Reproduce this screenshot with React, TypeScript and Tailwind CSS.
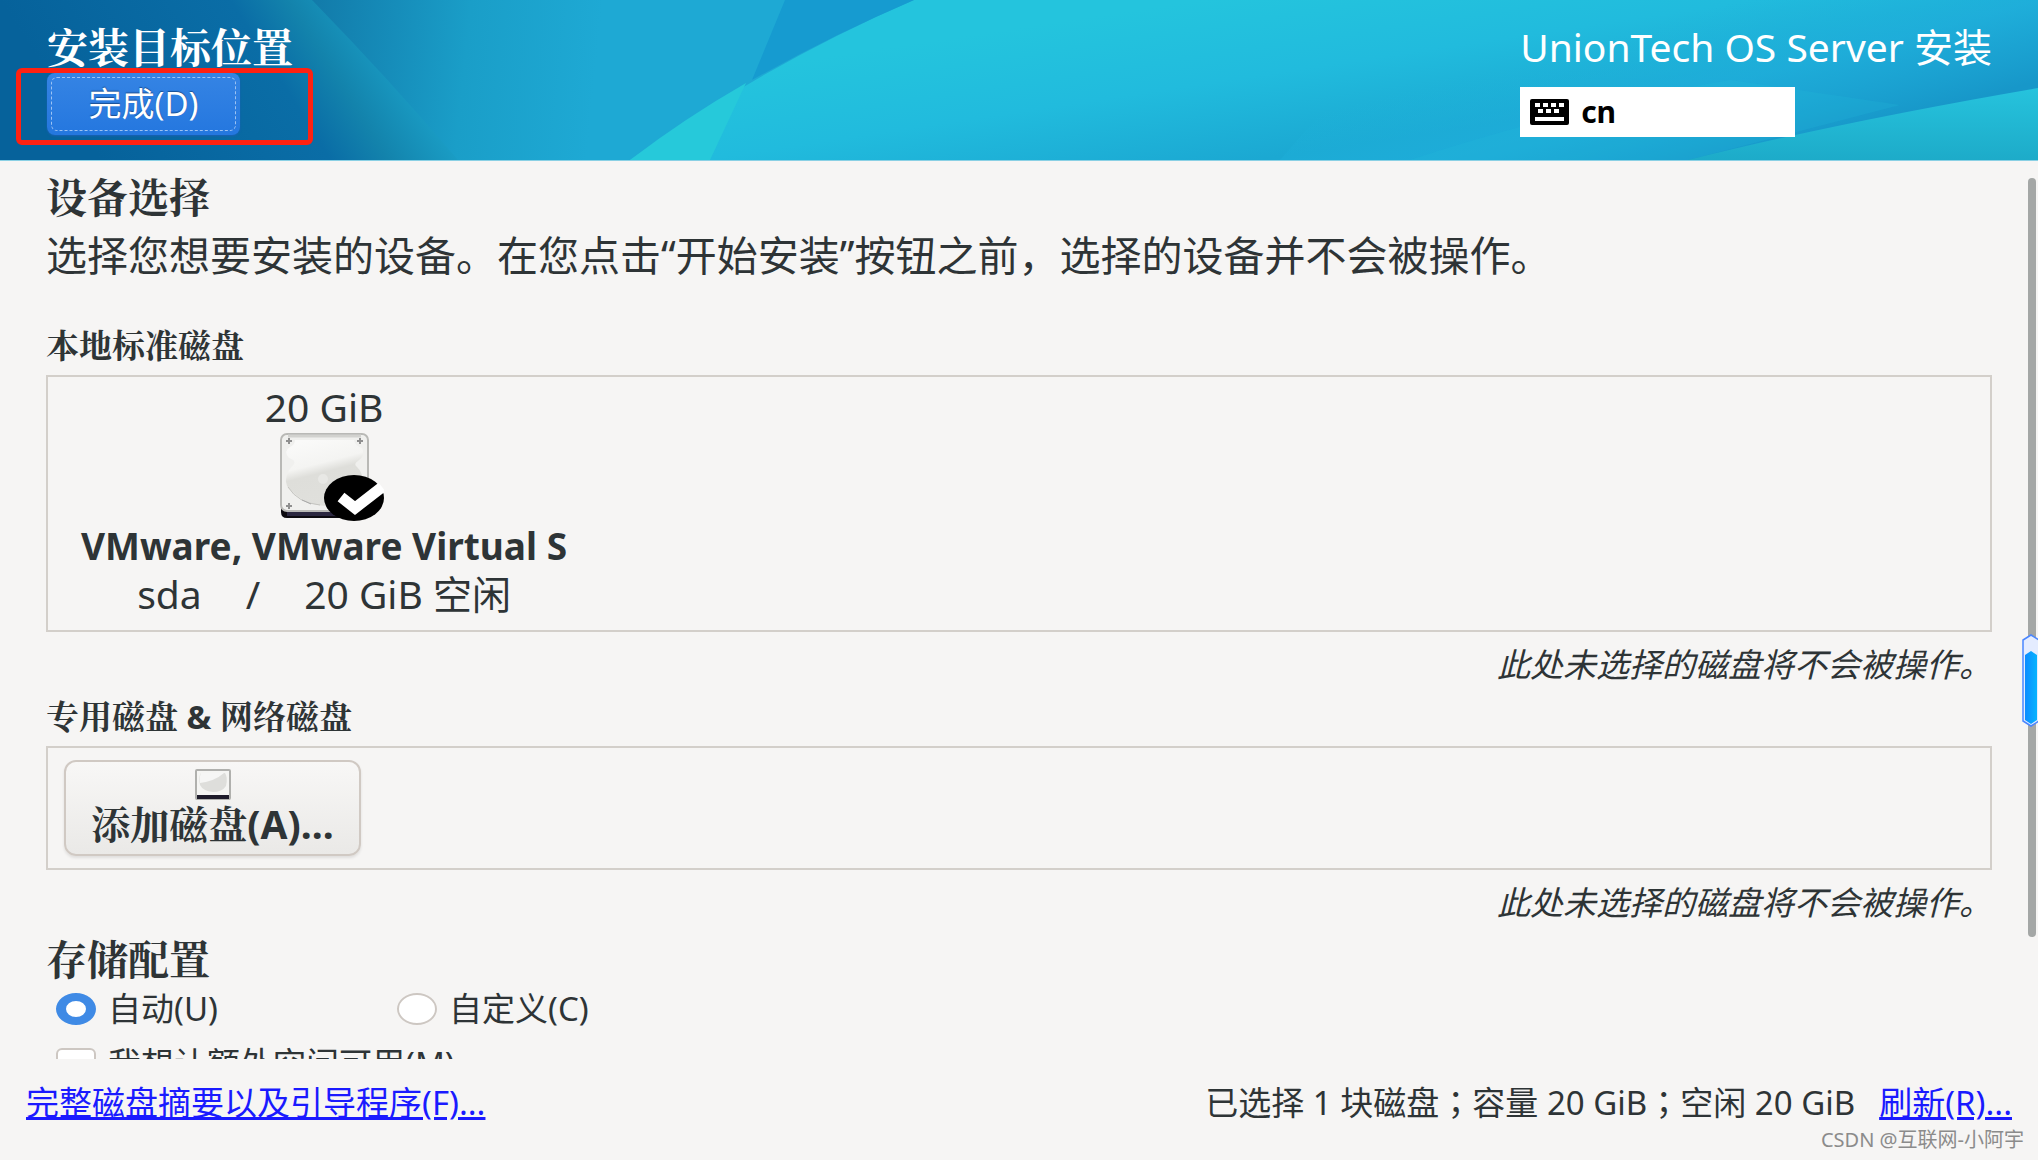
import React, { useState } from 'react';

const sans = "font-['Noto_Sans','Noto_Sans_CJK_SC',sans-serif]";
const serif = "font-['Noto_Sans','Noto_Serif_CJK_SC','Noto_Sans_CJK_SC',serif]";

function HeaderArt() {
    return (
        <svg className="absolute inset-0 h-full w-full" viewBox="0 0 2038 160" preserveAspectRatio="none" aria-hidden="true">
            <defs>
                <linearGradient id="left" gradientUnits="userSpaceOnUse" x1="0" y1="0" x2="259" y2="-162">
                    <stop offset="0" stopColor="#06629b" />
                    <stop offset="0.64" stopColor="#0a6da6" />
                    <stop offset="0.8" stopColor="#1383ac" />
                    <stop offset="1" stopColor="#1a9dc5" />
                </linearGradient>
                <linearGradient id="mid" gradientUnits="userSpaceOnUse" x1="310" y1="0" x2="600" y2="30">
                    <stop offset="0" stopColor="#127aa9" />
                    <stop offset="0.3" stopColor="#168dba" />
                    <stop offset="0.55" stopColor="#1a9ec8" />
                    <stop offset="1" stopColor="#1ea9d4" />
                </linearGradient>
                <linearGradient id="base" gradientUnits="userSpaceOnUse" x1="1200" y1="0" x2="1225" y2="165">
                    <stop offset="0" stopColor="#24c4dd" />
                    <stop offset="0.5" stopColor="#21bbdd" />
                    <stop offset="1" stopColor="#1ba8d2" />
                </linearGradient>
                <linearGradient id="shade" gradientUnits="userSpaceOnUse" x1="1740" y1="0" x2="1780" y2="150">
                    <stop offset="0" stopColor="#1fb5dc" stopOpacity="0" />
                    <stop offset="0.5" stopColor="#1faddb" stopOpacity="0.7" />
                    <stop offset="1" stopColor="#1797c9" />
                </linearGradient>
                <linearGradient id="corner" x1="0" y1="0" x2="0" y2="1">
                    <stop offset="0" stopColor="#26c3dd" />
                    <stop offset="1" stopColor="#1dabc9" />
                </linearGradient>
            </defs>
            <rect width="2038" height="160" fill="url(#base)" />
            <path d="M1280 160 L1420 0 H2038 V160 Z" fill="url(#shade)" />
            <path d="M1410 160 Q1580 105 1730 80 L1900 105 L1688 160 Z" fill="#22bddb" opacity="0.2" />
            <path d="M1688 160 Q1840 122 2038 88 V160 Z" fill="url(#corner)" />
            <path d="M0 0 H914 Q770 62 630 160 H0 Z" fill="url(#mid)" />
            <path d="M785 0 H914 Q830 36 752 80 Z" fill="#169bd0" />
            <path d="M630 160 Q685 118 746 83 L710 160 Z" fill="#26c9da" />
            <path d="M0 0 H312 Q390 80 458 160 H0 Z" fill="url(#left)" />
        </svg>
    );
}

function KeyboardIcon() {
    return (
        <svg className="h-[26px] w-[39px]" viewBox="0 0 39 26" preserveAspectRatio="none" aria-hidden="true">
            <rect width="39" height="26" rx="2" fill="#000" />
            <g fill="#fff">
                <rect x="5" y="4" width="5" height="4" />
                <rect x="13" y="4" width="5" height="4" />
                <rect x="21" y="4" width="5" height="4" />
                <rect x="29" y="4" width="5" height="4" />
                <rect x="8" y="10" width="5" height="4" />
                <rect x="16" y="10" width="5" height="4" />
                <rect x="24" y="10" width="5" height="4" />
                <rect x="5" y="18" width="29" height="4" />
            </g>
        </svg>
    );
}

function DiskIcon() {
    return (
        <svg className="ml-4 h-[89px] w-[104px]" viewBox="0 0 104 89" aria-hidden="true">
            <defs>
                <linearGradient id="platter" x1="0.3" y1="0" x2="0.6" y2="1">
                    <stop offset="0" stopColor="#fafaf9" />
                    <stop offset="0.36" stopColor="#f4f4f2" />
                    <stop offset="0.5" stopColor="#dededa" />
                    <stop offset="1" stopColor="#e0e0dc" />
                </linearGradient>
            </defs>
            <path d="M1 66 H88 V80 Q88 85 82 85 H7 Q1 85 1 79 Z" fill="#0c0a10" />
            <path d="M7 81 H84" stroke="#2b2740" strokeWidth="4" />
            <rect x="1" y="1" width="87" height="77" rx="6" fill="#f0f0ee" stroke="#b9b9b6" strokeWidth="2" />
            <path d="M8 3 H81" stroke="#d2d2cf" strokeWidth="3" />
            <path d="M15 7 H74 Q75 13 82 15 Q86 22 78 28 Q73 31 77 34 Q84 40 82 52 Q74 72 47 73 Q22 72 7 53 Q3 42 14 31 Q16 27 9 25 Q3 18 10 14 Q15 12 15 7 Z" fill="url(#platter)" />
            <path d="M8 54 Q18 70 40 72" stroke="#c4c4c0" strokeWidth="1" fill="none" />
            <path d="M22 67 L31 71" stroke="#aaa" strokeWidth="1" />
            <circle cx="43" cy="46" r="5" fill="#e8e8e5" />
            <g stroke="#8f8f8f" strokeWidth="2">
                <path d="M6 8 h6 M9 5 v6" />
                <path d="M77 8 h6 M80 5 v6" />
                <path d="M6 73 h6 M9 70 v6" />
            </g>
            <ellipse cx="74" cy="65" rx="30" ry="23" fill="#000" />
            <path d="M61 64 L75 75 L102 54" stroke="#fff" strokeWidth="11" fill="none" />
        </svg>
    );
}

function SmallDiskIcon() {
    return (
        <svg className="h-[31px] w-9" viewBox="0 0 36 31" aria-hidden="true">
            <rect x="1" y="1" width="34" height="29" rx="1" fill="#f5f5f3" stroke="#b0b0ad" strokeWidth="2" />
            <path d="M2 28 H34" stroke="#1e1b2a" strokeWidth="4" />
            <path d="M6 4 H30 Q33 8 31 17 Q27 23 18 23 Q8 22 5 16 Q3 8 6 4 Z" fill="#dededb" />
            <path d="M6 4 H29 Q20 12 5 14 Q4 8 6 4 Z" fill="#f6f6f5" />
        </svg>
    );
}

// the centred full-width semicolon comes from the Japanese face
function Semicolon() {
    return <span className="font-['Noto_Sans_CJK_JP',sans-serif] leading-none">；</span>;
}

const radioClass =
    'h-8 w-10 appearance-none rounded-[50%] border-2 border-[#cdc7c2] bg-white checked:border-x-10 checked:border-y-8 checked:border-[#3f8ae5]';

export default function App() {
    const [layout, setLayout] = useState('auto');

    return (
        <div className={`relative flex h-screen flex-col overflow-hidden bg-[#f6f5f4] text-[33px] leading-[44px] text-[#2e3436] ${sans}`}>
            {/* Header */}
            <header className="relative flex h-[161px] shrink-0 justify-between border-b border-[#8ad0e4] pl-[47px] pr-[46px] text-white">
                <HeaderArt />
                <div className="relative flex flex-col items-start pt-[21px]">
                    <h1 className={`text-[41px] font-bold leading-[52px] ${serif}`}>安装目标位置</h1>
                    <button type="button" className="h-[62px] w-[193px] rounded-lg bg-linear-to-b from-[#3584e4] to-[#2477df] p-1 shadow-[0_1px_2px_#1b5fb5]">
                        <span className="flex h-full items-center justify-center rounded-md border border-dashed border-[#9cc2f3] [text-shadow:0_-1px_1px_#1a4f94]">
                            完成(D)
                        </span>
                    </button>
                    <div className="pointer-events-none absolute -left-[31px] top-[68px] h-[77px] w-[297px] rounded-md border-5 border-[#ff2111]" />
                </div>
                <div className="relative flex flex-col items-start pt-[21px]">
                    <div className="text-[39px] leading-[52px]">UnionTech OS Server 安装</div>
                    <button type="button" className="mt-[14px] flex h-[50px] w-[275px] items-center gap-3 bg-white px-[10px] text-[30px] font-bold text-black">
                        <KeyboardIcon />
                        cn
                    </button>
                </div>
            </header>

            {/* Scrolling content */}
            <main className="min-h-0 flex-1 overflow-hidden pl-[46px] pr-[46px] pt-2">
                <h2 className={`text-[41px] font-bold leading-[56px] ${serif}`}>设备选择</h2>
                <p className="mt-[2px] whitespace-nowrap text-[41px] leading-[56px]">
                    选择您想要安装的设备。在您点击“开始安装”按钮之前，选择的设备并不会被操作。
                </p>

                <h3 className={`mt-[41px] font-bold ${serif}`}>本地标准磁盘</h3>
                <div className="mt-[7px] flex h-[257px] border-2 border-[#d3cfca] px-[33px] pt-1">
                    <button type="button" className="flex flex-col items-center self-start text-[39px] leading-[52px]">
                        <span>20 GiB</span>
                        <DiskIcon />
                        <span className="whitespace-nowrap text-[37px] font-bold leading-[48px]">VMware, VMware Virtual S</span>
                        <span className="flex leading-[48px]">
                            <span>sda</span>
                            <span className="mx-11">/</span>
                            <span>20 GiB 空闲</span>
                        </span>
                    </button>
                </div>
                <p className="mt-[11px] text-right italic">此处未选择的磁盘将不会被操作。</p>

                <h3 className={`mt-2 font-bold ${serif}`}>专用磁盘 &amp; 网络磁盘</h3>
                <div className="mt-[7px] flex h-[124px] border-2 border-[#d3cfca] px-4 pt-3">
                    <button
                        type="button"
                        className={`flex h-24 w-[297px] flex-col items-center rounded-xl border-2 border-[#d0c9c3] bg-linear-to-b from-[#f8f7f6] to-[#eae9e7] pt-[7px] text-[39px] font-bold leading-[48px] shadow-[0_2px_3px_#00000018] ${serif}`}
                    >
                        <SmallDiskIcon />
                        添加磁盘(A)...
                    </button>
                </div>
                <p className="mt-[11px] text-right italic">此处未选择的磁盘将不会被操作。</p>

                <h2 className={`mt-[6px] text-[41px] font-bold leading-[56px] ${serif}`}>存储配置</h2>
                <div className="mt-[2px] flex h-10 items-center pl-[10px]">
                    <label className="flex w-[341px] items-center gap-3">
                        <input type="radio" name="layout" className={radioClass} checked={layout === 'auto'} onChange={() => setLayout('auto')} />
                        自动(U)
                    </label>
                    <label className="flex items-center gap-3">
                        <input type="radio" name="layout" className={radioClass} checked={layout === 'custom'} onChange={() => setLayout('custom')} />
                        自定义(C)
                    </label>
                </div>
                <label className="mt-[15px] flex h-10 items-center gap-3 pl-[10px]">
                    <input type="checkbox" className="h-8 w-10 appearance-none rounded-md border-2 border-[#cdc7c2] bg-white" />
                    我想让额外空间可用(M)
                </label>
            </main>

            {/* Footer */}
            <footer className="flex h-[101px] shrink-0 flex-col">
                <div className="flex justify-between pl-[26px] pr-[26px] pt-[22px]">
                    <a href="#summary" className="text-[#1a1aff] underline">完整磁盘摘要以及引导程序(F)...</a>
                    <div className="flex gap-6">
                        <span>已选择 1 块磁盘<Semicolon />容量 20 GiB<Semicolon />空闲 20 GiB</span>
                        <a href="#refresh" className="text-[#1a1aff] underline">刷新(R)...</a>
                    </div>
                </div>
                <div className="pr-[14px] text-right text-[20px] leading-[30px] text-[#8b8b8b]">CSDN @互联网-小阿宇</div>
            </footer>

            {/* Scrollbar and side handle */}
            <div className="absolute right-[2px] top-[178px] h-[759px] w-2 rounded-full bg-[#a4a7a6]" />
            <svg className="absolute right-0 top-[634px] h-[93px] w-4" viewBox="0 0 16 93" aria-hidden="true">
                <defs>
                    <linearGradient id="handle" x1="0" y1="0" x2="1" y2="0">
                        <stop offset="0" stopColor="#0d8bff" />
                        <stop offset="1" stopColor="#06b4ff" />
                    </linearGradient>
                </defs>
                <path d="M9 1 L17 6 V87 L9 92 L1 87 V6 Z" fill="#e4ecff" stroke="#4a86ff" strokeWidth="1.5" />
                <path d="M9 17 L15 21 V86 L9 90 L3 86 V21 Z" fill="url(#handle)" />
            </svg>
        </div>
    );
}
